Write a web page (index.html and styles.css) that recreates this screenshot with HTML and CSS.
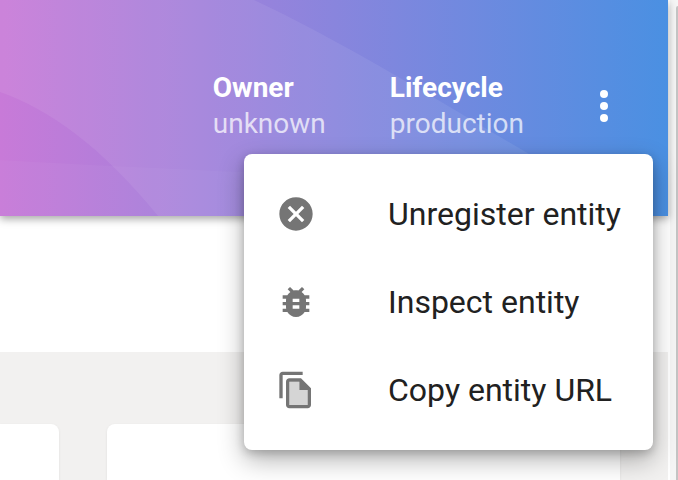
FILE: index.html

```html
<!DOCTYPE html>
<html lang="en">
<head>
  <meta charset="UTF-8">
  <meta name="viewport" content="width=device-width, initial-scale=1.0"/>
  <title>Entity page</title>
  <link rel="stylesheet" href="styles.css">
</head>
<body>
  <div class="page">
    <div class="main">
      <header class="header">
        <svg class="waves" viewBox="0 0 668 216" preserveAspectRatio="none">
          <path class="wave-light" d="M0 0H254C350 45 450 108 560 172L640 216H158C100 145 50 110 0 92Z"/>
          <path class="wave-band" d="M0 160C120 167 250 172 400 180L450 216H0Z"/>
        </svg>
        <div class="meta">
          <div class="meta-item">
            <div class="meta-label">Owner</div>
            <div class="meta-value">unknown</div>
          </div>
          <div class="meta-item">
            <div class="meta-label">Lifecycle</div>
            <div class="meta-value">production</div>
          </div>
        </div>
        <button class="more-btn" aria-label="More">
          <span></span><span></span><span></span>
        </button>
      </header>
      <div class="tabs"></div>
      <div class="content">
        <div class="card card-left"></div>
        <div class="card card-right"></div>
      </div>
    </div>
    <div class="scrollbar"><div class="scroll-thumb"></div></div>
  </div>

  <ul class="menu">
    <li class="menu-item">
      <span class="menu-icon">
        <svg viewBox="0 0 24 24" width="40" height="40"><path d="M12 2C6.47 2 2 6.47 2 12s4.47 10 10 10 10-4.47 10-10S17.53 2 12 2zm5 13.59L15.59 17 12 13.41 8.41 17 7 15.59 10.59 12 7 8.41 8.41 7 12 10.59 15.59 7 17 8.41 13.41 12 17 15.59z"/></svg>
      </span>
      <span class="menu-text">Unregister entity</span>
    </li>
    <li class="menu-item">
      <span class="menu-icon">
        <svg viewBox="0 0 24 24" width="40" height="40"><path d="M20 8h-2.81c-.45-.78-1.07-1.45-1.82-1.96L17 4.41 15.59 3l-2.17 2.17C12.96 5.06 12.49 5 12 5s-.96.06-1.41.17L8.41 3 7 4.41l1.62 1.63C7.88 6.55 7.26 7.22 6.81 8H4v2h2.09c-.05.33-.09.66-.09 1v1H4v2h2v1c0 .34.04.67.09 1H4v2h2.81c1.04 1.79 2.97 3 5.19 3s4.15-1.21 5.19-3H20v-2h-2.09c.05-.33.09-.66.09-1v-1h2v-2h-2v-1c0-.34-.04-.67-.09-1H20V8zm-6 8h-4v-2h4v2zm0-4h-4v-2h4v2z"/></svg>
      </span>
      <span class="menu-text">Inspect entity</span>
    </li>
    <li class="menu-item">
      <span class="menu-icon">
        <svg viewBox="0 0 24 24" width="40" height="40"><path opacity=".3" d="M14 7H8v14h11v-9h-5z"/><path d="M16 1H4c-1.1 0-2 .9-2 2v14h2V3h12V1zm-1 4H8c-1.1 0-1.99.9-1.99 2L6 21c0 1.1.89 2 1.99 2H19c1.1 0 2-.9 2-2V11l-6-6zm4 16H8V7h6v5h5v9z"/></svg>
      </span>
      <span class="menu-text">Copy entity URL</span>
    </li>
  </ul>
</body>
</html>
```

FILE: styles.css

```css
html, body {
  margin: 0;
  padding: 0;
  height: 480px;
  overflow: hidden;
}
body {
  font-family: Roboto, "Liberation Sans", sans-serif;
  background: #fff;
  position: relative;
}
.page {
  display: flex;
  height: 480px;
}
.main {
  flex: 1;
  display: flex;
  flex-direction: column;
  min-width: 0;
}
.scrollbar {
  width: 10px;
  background: #f5f5f5;
  border-left: 2px solid #fff;
  box-sizing: border-box;
  padding: 6px 0 0 6px;
}
.scroll-thumb {
  width: 2px;
  height: 100%;
  background: #c4c4c4;
  border-radius: 2px 0 0 0;
}
.header {
  position: relative;
  height: 216px;
  flex: none;
  display: flex;
  justify-content: flex-end;
  align-items: flex-start;
  background: linear-gradient(90deg, #c87ad8 0%, #4a90e2 100%);
  box-shadow: 0 3px 8px rgba(0,0,0,0.35);
  z-index: 1;
  color: #fff;
}
.waves {
  position: absolute;
  left: 0;
  top: 0;
  width: 100%;
  height: 100%;
}
.wave-light { fill: rgba(255,255,255,0.07); }
.wave-band { fill: rgba(255,255,255,0.03); }
.meta {
  position: relative;
  display: flex;
  gap: 64px;
  margin-top: 70px;
  margin-right: 144px;
}
.meta-label {
  font-size: 28px;
  font-weight: 700;
  line-height: 36px;
}
.meta-value {
  font-size: 28px;
  line-height: 36px;
  color: rgba(255,255,255,0.72);
}
.more-btn {
  position: absolute;
  left: 594px;
  top: 90px;
  width: 20px;
  padding: 0;
  border: none;
  background: none;
  display: flex;
  flex-direction: column;
  align-items: center;
  gap: 4px;
}
.more-btn span {
  width: 8px;
  height: 8px;
  border-radius: 50%;
  background: #fff;
}
.tabs {
  height: 136px;
  flex: none;
  background: #fff;
}
.content {
  flex: 1;
  background: #f2f1f0;
  display: flex;
  gap: 48px;
  padding-top: 72px;
}
.card {
  background: #fff;
  border-radius: 8px 8px 0 0;
  box-shadow: 0 1px 3px rgba(0,0,0,0.08);
}
.card-left { width: 59px; border-top-left-radius: 0; }
.card-right { width: 513px; }
.menu {
  position: absolute;
  left: 244px;
  top: 154px;
  width: 409px;
  height: 296px;
  margin: 0;
  padding: 16px 0;
  box-sizing: border-box;
  list-style: none;
  background: #fff;
  border-radius: 8px;
  box-shadow: 0 10px 26px rgba(0,0,0,0.3), 0 3px 10px rgba(0,0,0,0.2);
  z-index: 2;
}
.menu-item {
  display: flex;
  align-items: center;
  height: 88px;
  padding-left: 32px;
}
.menu-icon {
  width: 112px;
  display: flex;
  color: #757575;
}
.menu-icon svg { fill: currentColor; }
.menu-text {
  font-size: 32px;
  color: #212121;
  white-space: nowrap;
}
```
